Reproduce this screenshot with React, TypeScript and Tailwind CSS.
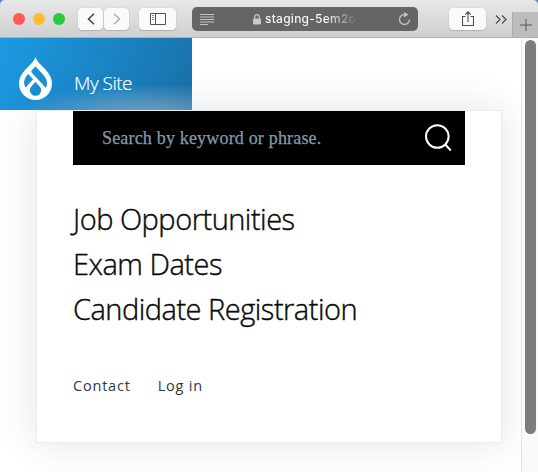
import React from 'react';

function Logo() {
  return (
    <svg className="mt-[19px] ml-[18px] h-[43px] w-[35px] shrink-0" viewBox="2.4 0 19.2 24" fill="#fff">
      <path d="M15.78 5.113C14.09 3.425 12.48 1.815 11.998 0c-.48 1.815-2.09 3.425-3.778 5.113-2.534 2.53-5.405 5.4-5.405 9.702a9.184 9.185 0 1018.368 0c0-4.303-2.871-7.171-5.405-9.702M6.72 16.954c-.563-.019-2.64-3.6 1.215-7.416l2.55 2.788a.218.218 0 01-.016.325c-.61.625-3.204 3.227-3.527 4.126-.066.186-.164.18-.222.177M12 21.677a3.158 3.158 0 01-3.158-3.159 3.291 3.291 0 01.787-2.087c.57-.696 2.37-2.655 2.37-2.655s1.774 1.988 2.367 2.649a3.09 3.09 0 01.792 2.093A3.158 3.158 0 0112 21.677m6.046-5.123c-.068.15-.223.398-.431.405-.371.014-.411-.177-.686-.583-.602-.892-5.864-6.39-6.848-7.455-.866-.935-.122-1.595.223-1.94C10.736 6.547 12 5.285 12 5.285s3.766 3.574 5.336 6.016c1.57 2.443 1.029 4.556.71 5.253" />
    </svg>
  );
}

function Button({ className, children }: { className: string; children: React.ReactNode }) {
  return (
    <button className={`flex h-[22px] shrink-0 items-center justify-center rounded-[4px] bg-[#fafafa] shadow-[0_0_1px_rgba(0,0,0,0.25),0_1px_1px_rgba(0,0,0,0.15)] ${className}`}>
      {children}
    </button>
  );
}

function Toolbar() {
  return (
    <div className="bg-[#5f88c8]">
      <header className="flex h-[38px] items-start overflow-hidden rounded-t-[5px] border-b border-[#b0b0b0] bg-linear-to-b from-[#e8e8e8] to-[#d0d0d0] font-['Inter',sans-serif]">
        <div className="mt-[13px] ml-[13px] flex gap-[8px]">
          <i className="size-[12px] rounded-full bg-[#fc5b57]" />
          <i className="size-[12px] rounded-full bg-[#febc2e]" />
          <i className="size-[12px] rounded-full bg-[#28c840]" />
        </div>
        <div className="mt-[8px] ml-[13px] flex gap-px">
          <Button className="w-[25px]">
            <svg width="8" height="12" viewBox="0 0 8 12" fill="none" stroke="#404040" strokeWidth="1.500"><path d="M7 0.700L1.500 6L7 11.300" /></svg>
          </Button>
          <Button className="w-[25px]">
            <svg width="8" height="12" viewBox="0 0 8 12" fill="none" stroke="#adadad" strokeWidth="1.500"><path d="M1 0.700L6.500 6L1 11.300" /></svg>
          </Button>
        </div>
        <Button className="mt-[8px] ml-[10px] w-[37px]">
          <svg width="16" height="12" viewBox="0 0 16 12" fill="none" stroke="#505050"><path d="M.5.500h15v11H.5zM5.500.500v11" /><path stroke="#888" d="M2 2.500h2M2 4.500h2M2 6.500h2" /></svg>
        </Button>
        <div className="mt-[7px] ml-[16px] flex h-[24px] w-[226px] shrink-0 items-center rounded-[5px] bg-[#656565]">
          <svg className="ml-[8px]" width="15" height="11" viewBox="0 0 15 11" stroke="#c2c2c2"><path d="M0 .5h14M0 3h14M0 5.500h14M0 8h14M0 10.500h8" /></svg>
          <svg className="ml-[38px]" width="8" height="11" viewBox="0 0 8 11"><path d="M1.700 5V3a2.300 2.300 0 0 1 4.600 0v2" fill="none" stroke="#c9c9c9" strokeWidth="1.200" /><rect y="4.600" width="8" height="6" rx="1" fill="#c9c9c9" /></svg>
          <span className="ml-[4px] w-[93px] bg-linear-to-r from-white from-65% to-transparent to-100% bg-clip-text text-[12px] leading-[16px] font-medium tracking-[0.25px] whitespace-nowrap text-transparent">staging-5em2ou</span>
          <svg className="ml-[40px]" width="13" height="14" viewBox="0 0 13 14" fill="none" stroke="#c2c2c2" strokeWidth="1.300"><path d="M11.500 7.500A5 5 0 1 1 6.500 2.500H8" /><path fill="#c2c2c2" stroke="none" d="M6 0l4.500 2.600L6 5.500z" /></svg>
        </div>
        <Button className="mt-[8px] ml-[31px] w-[37px]">
          <svg width="12" height="16" viewBox="0 0 12 16" fill="none" stroke="#505050" strokeWidth="1.100"><path d="M3.500 5.500h-3v9h11v-9h-3M6 11V1M3.200 3.700L6 .9l2.800 2.800" /></svg>
        </Button>
        <svg className="mt-[15px] ml-[9px] shrink-0" width="12" height="9" viewBox="0 0 12 9" fill="none" stroke="#505050" strokeWidth="1.300"><path d="M1 .5l4 4-4 4M7 .5l4 4-4 4" /></svg>
        <div className="mt-[12px] ml-[5px] flex h-[26px] w-[26px] shrink-0 items-center justify-center border-l border-[#aaa] bg-[#bdbdbd]">
          <svg width="12" height="12" viewBox="0 0 12 12" stroke="#555"><path d="M0 6h12M6 0v12" /></svg>
        </div>
      </header>
    </div>
  );
}

export default function App() {
  return (
    <div className="flex h-[472px] w-[538px] flex-col overflow-hidden bg-white font-['Open_Sans',sans-serif]">
      <Toolbar />
      <main className="flex min-h-0 flex-1">
        <div className="w-[521px] shrink-0 overflow-hidden">
          <div className="flex h-[72px] w-[191.5px] bg-[radial-gradient(ellipse_140px_34px_at_150px_80px,rgba(190,205,215,0.65),rgba(190,205,215,0.3)_55%,transparent),linear-gradient(110deg,#1c9ae3,#1970a8)]">
            <Logo />
            <span className="mt-[31px] ml-[21px] text-[19px] leading-[28px] font-light tracking-[-0.5px] text-white [-webkit-text-stroke:0.2px_white]">My Site</span>
          </div>
          <section className="ml-[36px] h-[333px] w-[466px] border border-[#e9edef] bg-white pl-[36px] shadow-[0_0_36px_rgba(40,65,85,0.14)]">
            <div className="flex h-[54px] w-[392px] items-center bg-black">
              <span className="ml-[29px] w-[322px] font-['Liberation_Serif',serif] text-[18px] tracking-[0.18px] text-[#839aaa] [-webkit-text-stroke:0.25px_#839aaa]">Search by keyword or phrase.</span>
              <svg width="28" height="28" viewBox="0 0 28 28" fill="none" stroke="#fff" strokeWidth="2"><circle cx="13.300" cy="12.500" r="11.300" /><path d="M20.800 20l6 6.500" /></svg>
            </div>
            <nav className="mt-[31px] text-[29px] leading-[45px] font-light tracking-[-0.5px] text-[#080a0c] [-webkit-text-stroke:0.4px_#080a0c]">
              <p>Job Opportunities</p>
              <p>Exam Dates</p>
              <p>Candidate Registration</p>
            </nav>
            <nav className="mt-[42.5px] flex gap-[27px] text-[14.500px] leading-[24px] tracking-[0.8px] text-[#2c3942]">
              <span>Contact</span><span>Log in</span>
            </nav>
          </section>
        </div>
        <aside className="flex w-[17px] justify-center border-l border-[#e5e5e5] bg-[#fafafa] pt-[2px]">
          <div className="h-[394px] w-[11px] rounded-full bg-[#7c7c7c]" />
        </aside>
      </main>
    </div>
  );
}
